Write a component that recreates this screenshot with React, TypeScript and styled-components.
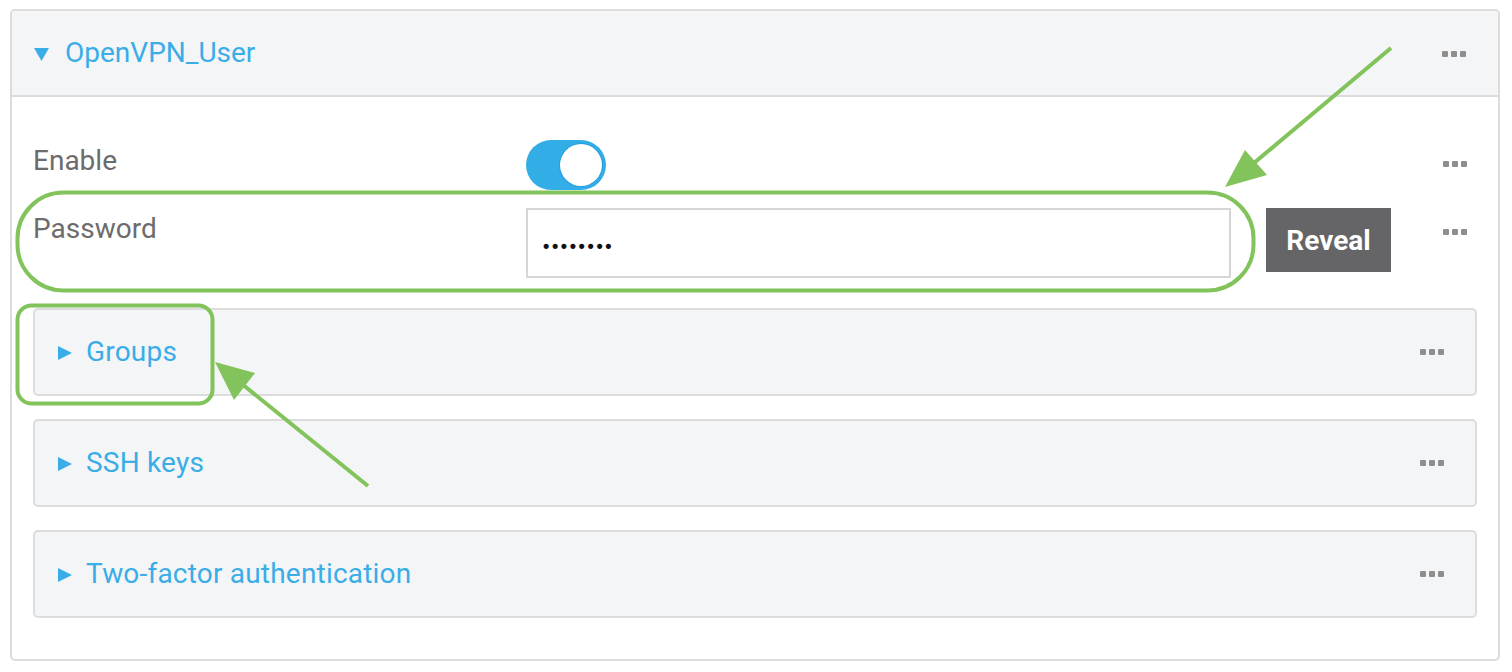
import React from "react";
import styled, { createGlobalStyle } from "styled-components";

const GlobalStyle = createGlobalStyle`
  html, body {
    margin: 0;
    padding: 0;
    background: #ffffff;
  }
  body {
    font-family: Roboto, "Open Sans", "Liberation Sans", sans-serif;
  }
  * { box-sizing: border-box; }
`;

const Page = styled.div`
  position: relative;
  width: 1512px;
  height: 672px;
  padding: 9px 0 0 10px;
  overflow: hidden;
`;

const Panel = styled.section`
  width: 1490px;
  border: 2px solid #dcdcdc;
  border-radius: 5px;
  background: #ffffff;
`;

const PanelHeader = styled.header`
  display: flex;
  align-items: center;
  justify-content: space-between;
  height: 86px;
  padding: 0 32px 0 22px;
  background: #f4f5f7;
  border-bottom: 2px solid #dcdcdc;
  border-radius: 3px 3px 0 0;
`;

const Title = styled.div<{ $caretGap?: number }>`
  display: flex;
  align-items: center;
  gap: ${(p) => p.$caretGap ?? 16}px;
  color: #3aade7;
  font-size: 28px;
  line-height: 34px;
  font-weight: 400;
`;

const Caret = ({ dir }: { dir: "down" | "right" }) =>
  dir === "down" ? (
    <svg width="15" height="14" viewBox="0 0 15 14" style={{ marginTop: 2 }}>
      <polygon points="0,1 15,1 7.5,14" fill="#3aade7" />
    </svg>
  ) : (
    <svg width="14" height="14" viewBox="0 0 14 14" style={{ marginTop: 2 }}>
      <polygon points="0,0 14,7 0,14" fill="#3aade7" />
    </svg>
  );

const Dots = styled.div<{ $top?: number }>`
  display: flex;
  gap: 3px;
  margin-top: ${(p) => p.$top ?? 0}px;
  flex-shrink: 0;
`;

const Dot = styled.span`
  width: 6px;
  height: 6px;
  background: #8e8e8e;
  border-radius: 1px;
`;

const Ellipsis = ({ top }: { top?: number }) => (
  <Dots $top={top}>
    <Dot />
    <Dot />
    <Dot />
  </Dots>
);

const PanelBody = styled.div`
  padding: 43px 21px 41px 21px;
`;

const FieldRow = styled.div<{ $mt?: number }>`
  display: flex;
  align-items: flex-start;
  margin-top: ${(p) => p.$mt ?? 0}px;
  padding-right: 10px;
`;

const Label = styled.div`
  width: 493px;
  flex-shrink: 0;
  margin-top: 4px;
  color: #6c6c6c;
  font-size: 28px;
  line-height: 34px;
`;

const Control = styled.div`
  flex: 1;
  display: flex;
  align-items: flex-start;
`;

const Track = styled.div<{ $on: boolean }>`
  position: relative;
  width: 80px;
  height: 50px;
  border-radius: 25px;
  background: ${(p) => (p.$on ? "#33ade6" : "#cccccc")};
`;

const Knob = styled.div<{ $on: boolean }>`
  position: absolute;
  top: 4px;
  left: ${(p) => (p.$on ? "34px" : "4px")};
  width: 42px;
  height: 42px;
  border-radius: 50%;
  background: #ffffff;
  box-shadow: 0 0 0 1px rgba(20, 140, 210, 0.45);
`;

const Toggle = ({ on }: { on: boolean }) => (
  <Track $on={on}>
    <Knob $on={on} />
  </Track>
);

const PasswordBox = styled.div`
  width: 705px;
  height: 70px;
  border: 2px solid #d6d6d6;
  background: #ffffff;
  display: flex;
  align-items: center;
  padding: 6px 0 0 15px;
  color: #111111;
  font-family: "Liberation Sans", Arial, sans-serif;
  font-size: 18px;
  font-weight: 700;
  letter-spacing: 2.6px;
`;

const RevealButton = styled.button`
  width: 125px;
  height: 64px;
  margin-left: 35px;
  border: none;
  background: #656567;
  color: #ffffff;
  font-family: Roboto, "Open Sans", sans-serif;
  font-size: 28px;
  font-weight: 700;
  padding: 0;
  cursor: pointer;
`;

const SubList = styled.div`
  display: flex;
  flex-direction: column;
  gap: 23px;
  margin-top: 30px;
`;

const SubSection = styled.div`
  display: flex;
  align-items: center;
  justify-content: space-between;
  height: 88px;
  padding: 0 31px 0 23px;
  background: #f4f5f7;
  border: 2px solid #dcdcdc;
  border-radius: 5px;
`;

const SubTitle = styled(Title)`
  letter-spacing: 0.2px;
`;

const Annotations = styled.svg`
  position: absolute;
  left: 0;
  top: 0;
  pointer-events: none;
`;

const GREEN = "#82c35b";

const subsections = ["Groups", "SSH keys", "Two-factor authentication"];

export default function App() {
  return (
    <>
      <GlobalStyle />
      <Page>
        <Panel>
          <PanelHeader>
            <Title>
              <Caret dir="down" />
              OpenVPN_User
            </Title>
            <Ellipsis top={2} />
          </PanelHeader>
          <PanelBody>
            <FieldRow>
              <Label>Enable</Label>
              <Control>
                <Toggle on />
              </Control>
              <Ellipsis top={21} />
            </FieldRow>
            <FieldRow $mt={18}>
              <Label>Password</Label>
              <Control>
                <PasswordBox>••••••••</PasswordBox>
                <RevealButton>Reveal</RevealButton>
              </Control>
              <Ellipsis top={21} />
            </FieldRow>
            <SubList>
              {subsections.map((s) => (
                <SubSection key={s}>
                  <SubTitle $caretGap={14}>
                    <Caret dir="right" />
                    {s}
                  </SubTitle>
                  <Ellipsis />
                </SubSection>
              ))}
            </SubList>
          </PanelBody>
        </Panel>
        <Annotations width="1512" height="672" viewBox="0 0 1512 672">
          <rect x="17.5" y="192.5" width="1236" height="98" rx="46" fill="none" stroke={GREEN} strokeWidth="4" />
          <rect x="17.5" y="305.5" width="195" height="98" rx="14" fill="none" stroke={GREEN} strokeWidth="4" />
          <line x1="1391" y1="48" x2="1248" y2="168" stroke={GREEN} strokeWidth="4" />
          <polygon points="1225,187 1245,150 1267,175" fill={GREEN} />
          <line x1="368" y1="486" x2="242" y2="384" stroke={GREEN} strokeWidth="4" />
          <polygon points="215,362 255,373 234,400" fill={GREEN} />
        </Annotations>
      </Page>
    </>
  );
}
